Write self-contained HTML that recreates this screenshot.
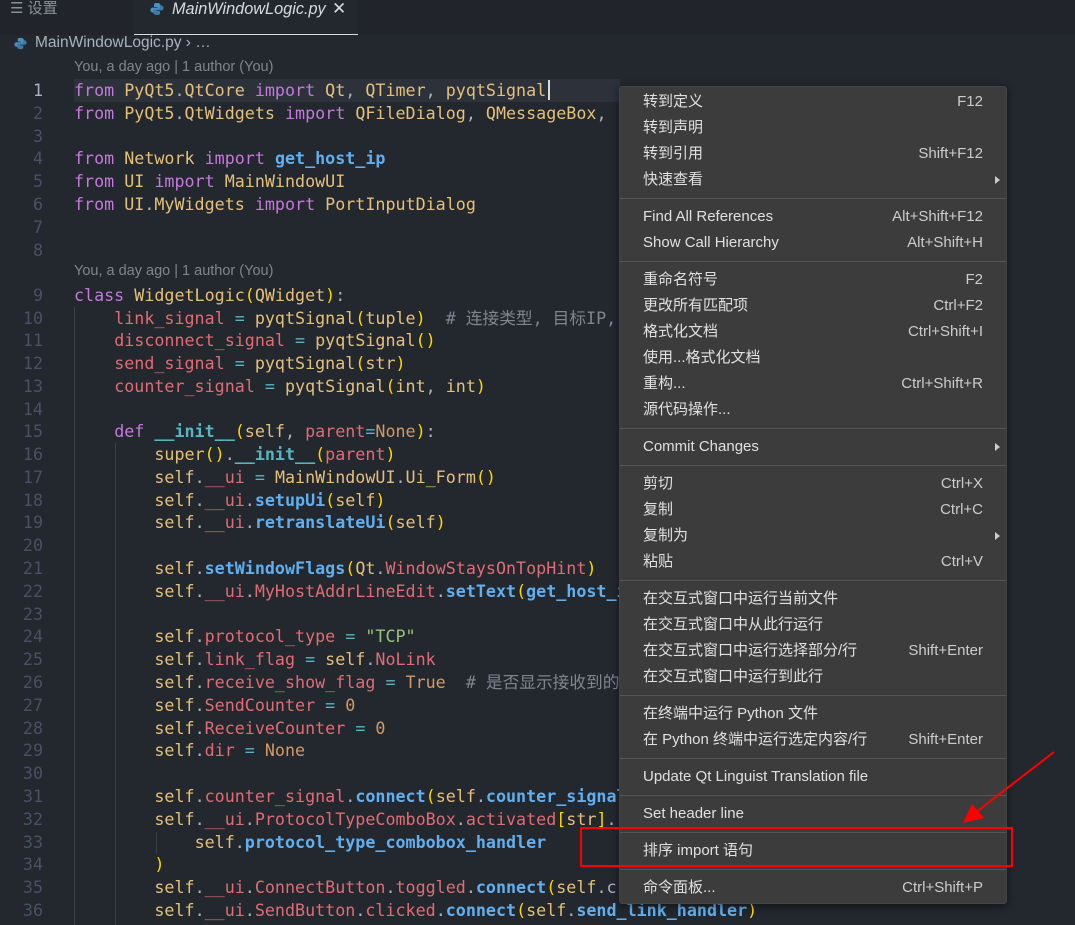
<!DOCTYPE html>
<html><head><meta charset="utf-8"><style>
*{margin:0;padding:0;box-sizing:border-box}
body{width:1075px;height:925px;background:#23272e;overflow:hidden;position:relative;font-family:"Liberation Sans","Noto Sans CJK SC",sans-serif}
.tabs{position:absolute;left:0;top:0;width:1075px;height:35px;background:#21252b}
.tab1{position:absolute;left:10px;top:0;color:#8a8f98;font-size:15px;line-height:18px}
.tab2{position:absolute;left:134px;top:0;width:224px;height:35px;background:#23272e;border-bottom:1px solid #d7dae0}
.tab2 span{position:absolute;left:38px;top:0;color:#d7dae0;font-style:italic;font-size:16.3px;line-height:18px}
.crumb{position:absolute;left:14px;top:34px;color:#abb2bf;font-size:15.5px;line-height:18px}
.blame{position:absolute;left:74px;color:#7f848e;font-size:14.5px;line-height:16px}
.ln{position:absolute;width:43px;text-align:right;color:#495162;font-family:"DejaVu Sans Mono",monospace;font-size:16.7px;line-height:22px}
.cl{position:absolute;left:74px;white-space:pre;color:#abb2bf;font-family:"DejaVu Sans Mono","Noto Sans CJK SC",monospace;font-size:16.7px;line-height:22px}
.k{color:#c678dd}.m{color:#e5c07b}.f{color:#61afef;font-weight:bold}.r{color:#e06c75}.c{color:#56b6c2}.o{color:#d19a66}.g{color:#98c379}.cm{color:#7f848e}.y{color:#ffd700}.pu{color:#da70d6}.cy{color:#56b6c2;font-weight:bold}
.guide{position:absolute;width:1px;background:#3b4048}
.menu{position:absolute;left:619px;top:86px;width:388px;height:818px;background:#3c3c3c;border:1px solid #454545;border-radius:3px;box-shadow:0 2px 8px rgba(0,0,0,.5)}
.it{position:absolute;left:0;width:386px;height:26px;line-height:26px;font-size:15px;color:#e0e0e0}
.it .l{position:absolute;left:23px}
.it .s{position:absolute;right:23px;color:#cccccc}
.it .a{position:absolute;right:6px;top:9px;width:0;height:0;border-left:5px solid #ccc;border-top:4px solid transparent;border-bottom:4px solid transparent}
.sep{position:absolute;left:0;width:386px;height:1px;background:#555}
</style></head><body>
<div class="tabs">
<div class="tab1">☰ 设置</div>
<div class="tab2"><svg style="position:absolute;left:16px;top:2px" width="14" height="14" viewBox="0 0 14 14"><path d="M7 1C4 1 4 2 4 3v2h3.5v.6H2.5C1 5.6 0.5 7 0.5 8s.7 2.5 2 2.5H4V9c0-1 1-2 2-2h3c1 0 1.5-.6 1.5-1.5V3C10.5 2 9.5 1 7 1z" fill="#4f8fbf"/><path d="M7 13c3 0 3-1 3-2V9H6.5v-.6h5c1.5 0 2-1.4 2-2.4s-.7-2.5-2-2.5H10V5c0 1-1 2-2 2H5C4 7 3.5 7.6 3.5 8.5V11c0 1 1 2 3.5 2z" fill="#3d7aab"/></svg><span>MainWindowLogic.py</span><span style="left:198px;font-style:normal;font-size:17px">✕</span></div>
</div>
<div class="crumb"><svg style="position:absolute;left:0;top:3px" width="13" height="13" viewBox="0 0 14 14"><path d="M7 1C4 1 4 2 4 3v2h3.5v.6H2.5C1 5.6 0.5 7 0.5 8s.7 2.5 2 2.5H4V9c0-1 1-2 2-2h3c1 0 1.5-.6 1.5-1.5V3C10.5 2 9.5 1 7 1z" fill="#4f8fbf"/><path d="M7 13c3 0 3-1 3-2V9H6.5v-.6h5c1.5 0 2-1.4 2-2.4s-.7-2.5-2-2.5H10V5c0 1-1 2-2 2H5C4 7 3.5 7.6 3.5 8.5V11c0 1 1 2 3.5 2z" fill="#3d7aab"/></svg><span style="margin-left:21px">MainWindowLogic.py › …</span></div>
<div class="blame" style="top:59px">You, a day ago | 1 author (You)</div>
<div class="blame" style="top:263px">You, a day ago | 1 author (You)</div>
<div style="position:absolute;left:74px;top:79px;width:546px;height:23px;background:#2c313a"></div>
<div style="position:absolute;left:548px;top:80px;width:2px;height:20px;background:#d7dae0"></div>
<div class="guide" style="left:74px;top:307px;height:618px"></div>
<div class="guide" style="left:115px;top:443px;height:482px"></div>
<div class="guide" style="left:156px;top:832px;height:22px"></div>

<div class="ln" style="top:79px;color:#abb2bf">1</div><div class="cl" style="top:79px"><span class="k">from</span> <span class="m">PyQt5</span>.<span class="m">QtCore</span> <span class="k">import</span> <span class="m">Qt</span>, <span class="m">QTimer</span>, <span class="m">pyqtSignal</span></div>
<div class="ln" style="top:102px">2</div><div class="cl" style="top:102px"><span class="k">from</span> <span class="m">PyQt5</span>.<span class="m">QtWidgets</span> <span class="k">import</span> <span class="m">QFileDialog</span>, <span class="m">QMessageBox</span>,</div>
<div class="ln" style="top:125px">3</div>
<div class="ln" style="top:147px">4</div><div class="cl" style="top:147px"><span class="k">from</span> <span class="m">Network</span> <span class="k">import</span> <span class="f">get_host_ip</span></div>
<div class="ln" style="top:170px">5</div><div class="cl" style="top:170px"><span class="k">from</span> <span class="m">UI</span> <span class="k">import</span> <span class="m">MainWindowUI</span></div>
<div class="ln" style="top:193px">6</div><div class="cl" style="top:193px"><span class="k">from</span> <span class="m">UI</span>.<span class="m">MyWidgets</span> <span class="k">import</span> <span class="m">PortInputDialog</span></div>
<div class="ln" style="top:216px">7</div>
<div class="ln" style="top:239px">8</div>

<div class="ln" style="top:284px">9</div><div class="cl" style="top:284px"><span class="k">class</span> <span class="m">WidgetLogic</span><span class="y">(</span><span class="m">QWidget</span><span class="y">)</span>:</div>
<div class="ln" style="top:307px">10</div><div class="cl" style="top:307px">    <span class="r">link_signal</span> <span class="c">=</span> <span class="m">pyqtSignal</span><span class="y">(</span><span class="m">tuple</span><span class="y">)</span>  <span class="cm"># 连接类型, 目标IP,</span></div>
<div class="ln" style="top:329px">11</div><div class="cl" style="top:329px">    <span class="r">disconnect_signal</span> <span class="c">=</span> <span class="m">pyqtSignal</span><span class="y">()</span></div>
<div class="ln" style="top:352px">12</div><div class="cl" style="top:352px">    <span class="r">send_signal</span> <span class="c">=</span> <span class="m">pyqtSignal</span><span class="y">(</span><span class="m">str</span><span class="y">)</span></div>
<div class="ln" style="top:375px">13</div><div class="cl" style="top:375px">    <span class="r">counter_signal</span> <span class="c">=</span> <span class="m">pyqtSignal</span><span class="y">(</span><span class="m">int</span>, <span class="m">int</span><span class="y">)</span></div>
<div class="ln" style="top:398px">14</div>
<div class="ln" style="top:420px">15</div><div class="cl" style="top:420px">    <span class="k">def</span> <span class="cy">__init__</span><span class="y">(</span><span class="m">self</span>, <span class="r">parent</span><span class="c">=</span><span class="o">None</span><span class="y">)</span>:</div>
<div class="ln" style="top:443px">16</div><div class="cl" style="top:443px">        <span class="m">super</span><span class="y">()</span>.<span class="cy">__init__</span><span class="y">(</span><span class="r">parent</span><span class="y">)</span></div>
<div class="ln" style="top:466px">17</div><div class="cl" style="top:466px">        <span class="m">self</span>.<span class="r">__ui</span> <span class="c">=</span> <span class="m">MainWindowUI</span>.<span class="m">Ui_Form</span><span class="y">()</span></div>
<div class="ln" style="top:489px">18</div><div class="cl" style="top:489px">        <span class="m">self</span>.<span class="r">__ui</span>.<span class="f">setupUi</span><span class="y">(</span><span class="m">self</span><span class="y">)</span></div>
<div class="ln" style="top:511px">19</div><div class="cl" style="top:511px">        <span class="m">self</span>.<span class="r">__ui</span>.<span class="f">retranslateUi</span><span class="y">(</span><span class="m">self</span><span class="y">)</span></div>
<div class="ln" style="top:534px">20</div>
<div class="ln" style="top:557px">21</div><div class="cl" style="top:557px">        <span class="m">self</span>.<span class="f">setWindowFlags</span><span class="y">(</span><span class="m">Qt</span>.<span class="r">WindowStaysOnTopHint</span><span class="y">)</span></div>
<div class="ln" style="top:580px">22</div><div class="cl" style="top:580px">        <span class="m">self</span>.<span class="r">__ui</span>.<span class="r">MyHostAddrLineEdit</span>.<span class="f">setText</span><span class="y">(</span><span class="f">get_host_ip</span></div>
<div class="ln" style="top:603px">23</div>
<div class="ln" style="top:625px">24</div><div class="cl" style="top:625px">        <span class="m">self</span>.<span class="r">protocol_type</span> <span class="c">=</span> <span class="g">"TCP"</span></div>
<div class="ln" style="top:648px">25</div><div class="cl" style="top:648px">        <span class="m">self</span>.<span class="r">link_flag</span> <span class="c">=</span> <span class="m">self</span>.<span class="r">NoLink</span></div>
<div class="ln" style="top:671px">26</div><div class="cl" style="top:671px">        <span class="m">self</span>.<span class="r">receive_show_flag</span> <span class="c">=</span> <span class="o">True</span>  <span class="cm"># 是否显示接收到的</span></div>
<div class="ln" style="top:694px">27</div><div class="cl" style="top:694px">        <span class="m">self</span>.<span class="r">SendCounter</span> <span class="c">=</span> <span class="o">0</span></div>
<div class="ln" style="top:717px">28</div><div class="cl" style="top:717px">        <span class="m">self</span>.<span class="r">ReceiveCounter</span> <span class="c">=</span> <span class="o">0</span></div>
<div class="ln" style="top:739px">29</div><div class="cl" style="top:739px">        <span class="m">self</span>.<span class="r">dir</span> <span class="c">=</span> <span class="o">None</span></div>
<div class="ln" style="top:762px">30</div>
<div class="ln" style="top:785px">31</div><div class="cl" style="top:785px">        <span class="m">self</span>.<span class="r">counter_signal</span>.<span class="f">connect</span><span class="y">(</span><span class="m">self</span>.<span class="f">counter_signal</span></div>
<div class="ln" style="top:808px">32</div><div class="cl" style="top:808px">        <span class="m">self</span>.<span class="r">__ui</span>.<span class="r">ProtocolTypeComboBox</span>.<span class="r">activated</span><span class="y">[</span><span class="m">str</span><span class="y">]</span>.</div>
<div class="ln" style="top:831px">33</div><div class="cl" style="top:831px">            <span class="m">self</span>.<span class="f">protocol_type_combobox_handler</span></div>
<div class="ln" style="top:853px">34</div><div class="cl" style="top:853px">        <span class="y">)</span></div>
<div class="ln" style="top:876px">35</div><div class="cl" style="top:876px">        <span class="m">self</span>.<span class="r">__ui</span>.<span class="r">ConnectButton</span>.<span class="r">toggled</span>.<span class="f">connect</span><span class="y">(</span><span class="m">self</span>.c</div>
<div class="ln" style="top:899px">36</div><div class="cl" style="top:899px">        <span class="m">self</span>.<span class="r">__ui</span>.<span class="r">SendButton</span>.<span class="r">clicked</span>.<span class="f">connect</span><span class="y">(</span><span class="m">self</span>.<span class="f">send_link_handler</span><span class="y">)</span></div>

<div class="menu">
<div class="it" style="top:2px"><span class="l">转到定义</span><span class="s">F12</span></div>
<div class="it" style="top:28px"><span class="l">转到声明</span></div>
<div class="it" style="top:54px"><span class="l">转到引用</span><span class="s">Shift+F12</span></div>
<div class="it" style="top:80px"><span class="l">快速查看</span><span class="a"></span></div>
<div class="sep" style="top:111px"></div>
<div class="it" style="top:117px"><span class="l">Find All References</span><span class="s">Alt+Shift+F12</span></div>
<div class="it" style="top:143px"><span class="l">Show Call Hierarchy</span><span class="s">Alt+Shift+H</span></div>
<div class="sep" style="top:174px"></div>
<div class="it" style="top:180px"><span class="l">重命名符号</span><span class="s">F2</span></div>
<div class="it" style="top:206px"><span class="l">更改所有匹配项</span><span class="s">Ctrl+F2</span></div>
<div class="it" style="top:232px"><span class="l">格式化文档</span><span class="s">Ctrl+Shift+I</span></div>
<div class="it" style="top:258px"><span class="l">使用...格式化文档</span></div>
<div class="it" style="top:284px"><span class="l">重构...</span><span class="s">Ctrl+Shift+R</span></div>
<div class="it" style="top:310px"><span class="l">源代码操作...</span></div>
<div class="sep" style="top:341px"></div>
<div class="it" style="top:347px"><span class="l">Commit Changes</span><span class="a"></span></div>
<div class="sep" style="top:378px"></div>
<div class="it" style="top:384px"><span class="l">剪切</span><span class="s">Ctrl+X</span></div>
<div class="it" style="top:410px"><span class="l">复制</span><span class="s">Ctrl+C</span></div>
<div class="it" style="top:436px"><span class="l">复制为</span><span class="a"></span></div>
<div class="it" style="top:462px"><span class="l">粘贴</span><span class="s">Ctrl+V</span></div>
<div class="sep" style="top:493px"></div>
<div class="it" style="top:499px"><span class="l">在交互式窗口中运行当前文件</span></div>
<div class="it" style="top:525px"><span class="l">在交互式窗口中从此行运行</span></div>
<div class="it" style="top:551px"><span class="l">在交互式窗口中运行选择部分/行</span><span class="s">Shift+Enter</span></div>
<div class="it" style="top:577px"><span class="l">在交互式窗口中运行到此行</span></div>
<div class="sep" style="top:608px"></div>
<div class="it" style="top:614px"><span class="l">在终端中运行 Python 文件</span></div>
<div class="it" style="top:640px"><span class="l">在 Python 终端中运行选定内容/行</span><span class="s">Shift+Enter</span></div>
<div class="sep" style="top:671px"></div>
<div class="it" style="top:677px"><span class="l">Update Qt Linguist Translation file</span></div>
<div class="sep" style="top:708px"></div>
<div class="it" style="top:714px"><span class="l">Set header line</span></div>
<div class="sep" style="top:745px"></div>
<div class="it" style="top:751px"><span class="l">排序 import 语句</span></div>
<div class="sep" style="top:782px"></div>
<div class="it" style="top:788px"><span class="l">命令面板...</span><span class="s">Ctrl+Shift+P</span></div>
</div>
<div style="position:absolute;left:580px;top:827px;width:433px;height:40px;border:2px solid #f00"></div>
<svg style="position:absolute;left:0;top:0" width="1075" height="925"><line x1="1054" y1="752" x2="975" y2="813" stroke="#f00" stroke-width="2"/><polygon points="963,823 972,804 984,818" fill="#f00"/></svg>
</body></html>
